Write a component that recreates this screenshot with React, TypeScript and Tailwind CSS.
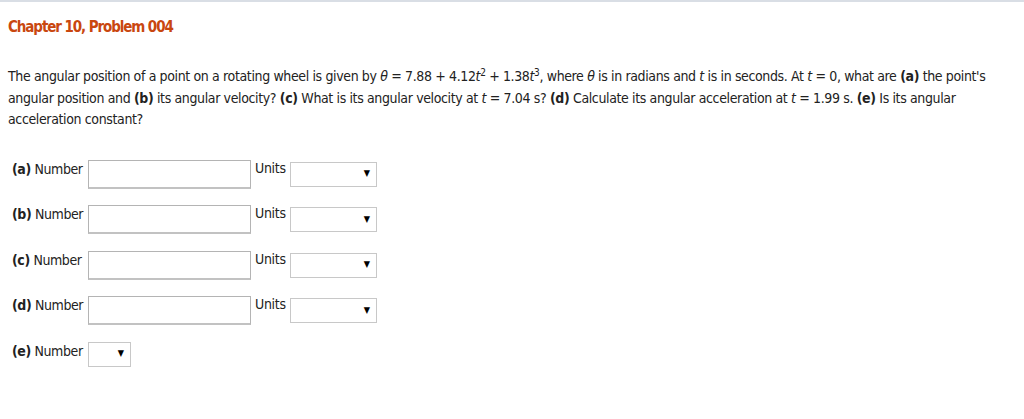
import React from "react";

const font = { fontFamily: '"DejaVu Sans Condensed", "DejaVu Sans", sans-serif' };

function Sel({ w }: { w: string }) {
  return (
    <div className={`${w} h-[25px] border border-[#c8c8c8] bg-white flex items-center justify-end pr-[6px] text-[9px] text-black`}>
      ▼
    </div>
  );
}

function Row({ label, units = true, select = false }: { label: string; units?: boolean; select?: boolean }) {
  return (
    <div className="flex items-start h-[45.5px]">
      <div className="w-[80px] pl-[4px] -mt-[1px] text-[14px] tracking-[-0.4px] text-[#222] whitespace-nowrap">
        <b>({label})</b> Number
      </div>
      {select ? (
        <Sel w="w-[43px]" />
      ) : (
        <>
          <div className="w-[163px] h-[29px] border border-[#b4b4b4] border-b-2 border-b-[#c2c2c2] bg-white" />
          {units && (
            <>
              <div className="pl-[4px] -mt-[2px] w-[39px] text-[14px] tracking-[-0.3px] text-[#222]">Units</div>
              <div className="pt-[2px]"><Sel w="w-[87px]" /></div>
            </>
          )}
        </>
      )}
    </div>
  );
}

export default function App() {
  return (
    <div className="w-[1024px] h-[419px] bg-white border-t-2 border-[#d9dee5] overflow-hidden" style={font}>
      <div className="pl-[8px] pt-[14px] text-[15px] tracking-[-1.1px] font-bold text-[#c9470f] leading-[22px]">
        Chapter 10, Problem 004
      </div>
      <p className="pl-[8px] mt-[28px] text-[14px] tracking-[-0.37px] leading-[21.5px] text-[#222] whitespace-nowrap">
        The angular position of a point on a rotating wheel is given by <i>θ</i> = 7.88 + 4.12<i>t</i>
        <sup className="text-[10px]">2</sup> + 1.38<i>t</i>
        <sup className="text-[10px]">3</sup>, where <i>θ</i> is in radians and <i>t</i> is in seconds. At <i>t</i> = 0, what are <b>(a)</b> the point's
        <br />
        angular position and <b>(b)</b> its angular velocity? <b>(c)</b> What is its angular velocity at <i>t</i> = 7.04 s? <b>(d)</b> Calculate its angular acceleration at <i>t</i> = 1.99 s. <b>(e)</b> Is its angular
        <br />
        acceleration constant?
      </p>
      <div className="pl-[8px] mt-[29px]">
        <Row label="a" />
        <Row label="b" />
        <Row label="c" />
        <Row label="d" />
        <Row label="e" select />
      </div>
    </div>
  );
}
